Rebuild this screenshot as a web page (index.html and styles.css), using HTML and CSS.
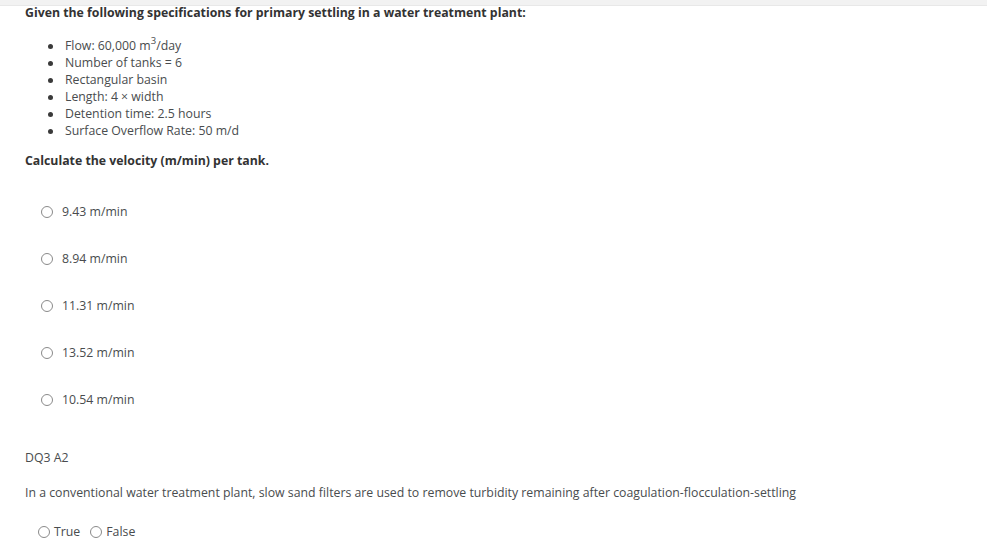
FILE: index.html
```html
<!DOCTYPE html>
<html>
<head>
<meta charset="utf-8">
<link rel="stylesheet" href="styles.css">
</head>
<body>
<div class="topbar"></div>
<main class="content">
  <p class="title">Given the following specifications for primary settling in a water treatment plant:</p>
  <ul class="specs">
    <li>Flow: 60,000 m<sup>3</sup>/day</li>
    <li>Number of tanks = 6</li>
    <li>Rectangular basin</li>
    <li>Length: 4 × width</li>
    <li>Detention time: 2.5 hours</li>
    <li>Surface Overflow Rate: 50 m/d</li>
  </ul>
  <p class="title calc">Calculate the velocity (m/min) per tank.</p>
  <div class="options">
    <label class="opt"><span class="radio"></span><span>9.43 m/min</span></label>
    <label class="opt"><span class="radio"></span><span>8.94 m/min</span></label>
    <label class="opt"><span class="radio"></span><span>11.31 m/min</span></label>
    <label class="opt"><span class="radio"></span><span>13.52 m/min</span></label>
    <label class="opt"><span class="radio"></span><span>10.54 m/min</span></label>
  </div>
  <p class="qname">DQ3 A2</p>
  <p class="question">In a conventional water treatment plant, slow sand filters are used to remove turbidity remaining after coagulation-flocculation-settling</p>
  <div class="tf">
    <label class="tfopt"><span class="radio"></span><span>True</span></label>
    <label class="tfopt"><span class="radio"></span><span>False</span></label>
  </div>
</main>
</body>
</html>
```

FILE: styles.css
```css
html, body {
  margin: 0;
  padding: 0;
  background: #ffffff;
}
body {
  font-family: "Open Sans", "Noto Sans", "Liberation Sans", sans-serif;
  font-size: 12.3px;
  line-height: 17px;
  color: #494c4e;
}
.topbar {
  height: 5px;
  background: #f2f2f2;
  border-bottom: 1px solid #e8e8e8;
}
.content {
  padding-left: 25px;
}
p { margin: 0; }
.title {
  font-weight: 700;
  color: #333333;
  margin-top: -2px;
}
.specs {
  margin: 16px 0 0 0;
  padding-left: 40px;
  list-style: none;
}
.specs li {
  line-height: 17px;
}
.specs li::before {
  content: "";
  display: inline-block;
  width: 5px;
  height: 5px;
  border-radius: 50%;
  background: #3a3a3a;
  margin-left: -17px;
  margin-right: 12px;
  vertical-align: 1px;
}
.specs sup {
  font-size: 9.5px;
  line-height: 0;
  vertical-align: 6px;
}
.calc {
  margin-top: 13px;
}
.options {
  margin-top: 34px;
  padding-left: 16px;
  display: flex;
  flex-direction: column;
  gap: 30px;
}
.opt {
  display: flex;
  align-items: center;
  gap: 9px;
}
.radio {
  display: inline-block;
  box-sizing: border-box;
  width: 12px;
  height: 12px;
  border: 1px solid #8a8a8a;
  border-radius: 50%;
  background: #fff;
  flex: none;
}
.qname {
  margin-top: 41px;
}
.question {
  margin-top: 18px;
}
.tf {
  margin-top: 22px;
  padding-left: 13px;
  display: flex;
  gap: 10px;
}
.tfopt {
  display: flex;
  align-items: center;
  gap: 4px;
}
```
